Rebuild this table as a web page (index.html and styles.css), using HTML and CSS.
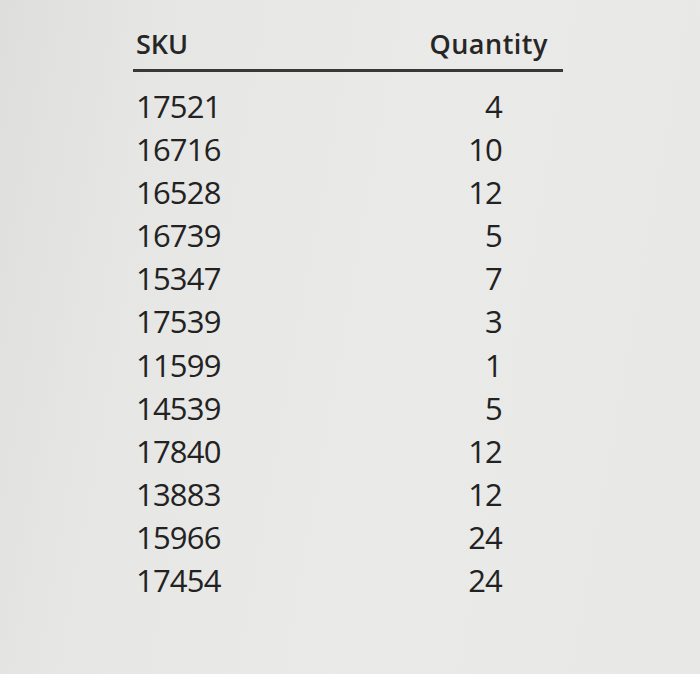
FILE: index.html
```html
<!DOCTYPE html>
<html>
<head>
<meta charset="utf-8">
<link rel="stylesheet" href="styles.css">
</head>
<body>
<div class="page">
  <div class="sheet">
    <div class="head">
      <span class="h-sku">SKU</span>
      <span class="h-qty">Quantity</span>
    </div>
    <div class="rows">
      <div class="row"><span>17521</span><span class="q">4</span></div>
      <div class="row"><span>16716</span><span class="q">10</span></div>
      <div class="row"><span>16528</span><span class="q">12</span></div>
      <div class="row"><span>16739</span><span class="q">5</span></div>
      <div class="row"><span>15347</span><span class="q">7</span></div>
      <div class="row"><span>17539</span><span class="q">3</span></div>
      <div class="row"><span>11599</span><span class="q">1</span></div>
      <div class="row"><span>14539</span><span class="q">5</span></div>
      <div class="row"><span>17840</span><span class="q">12</span></div>
      <div class="row"><span>13883</span><span class="q">12</span></div>
      <div class="row"><span>15966</span><span class="q">24</span></div>
      <div class="row"><span>17454</span><span class="q">24</span></div>
    </div>
  </div>
</div>
</body>
</html>
```
FILE: styles.css
```css
html, body {
  margin: 0;
  padding: 0;
}
body {
  width: 700px;
  height: 674px;
  overflow: hidden;
  background: linear-gradient(100deg, #dededc 0%, #e6e6e4 20%, #eaeae8 55%, #e8e8e6 100%);
  font-family: "Open Sans", "Liberation Sans", sans-serif;
  color: #222222;
}
.page {
  padding: 29px 0 0 133px;
}
.sheet {
  width: 430px;
}
.head {
  display: flex;
  justify-content: space-between;
  align-items: baseline;
  font-size: 27px;
  line-height: 30px;
  font-weight: 600;
  color: #262626;
  padding: 0 15px 10px 3px;
  border-bottom: 3px solid #383838;
}
.h-qty {
  letter-spacing: 0.5px;
}
.rows {
  padding: 13px 61px 0 3px;
}
.row {
  display: flex;
  justify-content: space-between;
  font-size: 31px;
  line-height: 43.1px;
  font-weight: 500;
  letter-spacing: -0.8px;
}
.q {
  text-align: right;
}
```
